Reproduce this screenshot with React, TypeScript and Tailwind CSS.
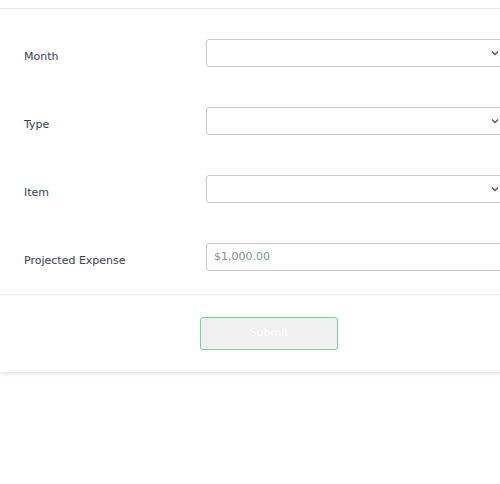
const font = { fontFamily: '"DejaVu Sans", Verdana, sans-serif' }

function Chevron() {
  return (
    <svg className="absolute right-[6px] top-1/2 -translate-y-1/2 w-[8px] h-[6px]" viewBox="0 0 8 6" fill="none">
      <path d="M1 1.5 L4 4.5 L7 1.5" stroke="#4b5563" strokeWidth="1.3" />
    </svg>
  )
}

function SelectBox() {
  return (
    <div className="relative w-[300px] h-[28px] rounded-[3px] border border-[#c9cbd9] bg-white">
      <Chevron />
    </div>
  )
}

const rows = ['Month', 'Type', 'Item']

export default function App() {
  return (
    <div className="w-[500px] h-[484px] overflow-hidden bg-white" style={font}>
      <div className="w-[540px] bg-white shadow-[0_2px_4px_rgba(0,0,0,0.12)]">
        <div className="h-[9px] border-b border-[#e8e8e8]" />
        <div className="flex flex-col gap-[40px] pt-[30px] pb-[23px] border-b border-[#efefef]">
          {rows.map((r) => (
            <div key={r} className="flex items-center">
              <div className="w-[206px] pl-[24px] text-[11px] text-[#394356] pt-[8px]">{r}</div>
              <SelectBox />
            </div>
          ))}
          <div className="flex items-center">
            <div className="w-[206px] pl-[24px] text-[11px] text-[#394356] pt-[8px]">Projected Expense</div>
            <div className="w-[300px] h-[28px] rounded-[3px] border border-[#c9cbd9] bg-white flex items-center pl-[7px] text-[11px] text-[#8891a3]">
              $1,000.00
            </div>
          </div>
        </div>
        <div className="pt-[22px] pb-[22px] pl-[200px]">
          <button className="w-[138px] h-[33px] rounded-[3px] border border-[#72d69c] bg-[#f0f0f0] text-white text-[11px]" style={font}>
            Submit
          </button>
        </div>
      </div>
    </div>
  )
}
